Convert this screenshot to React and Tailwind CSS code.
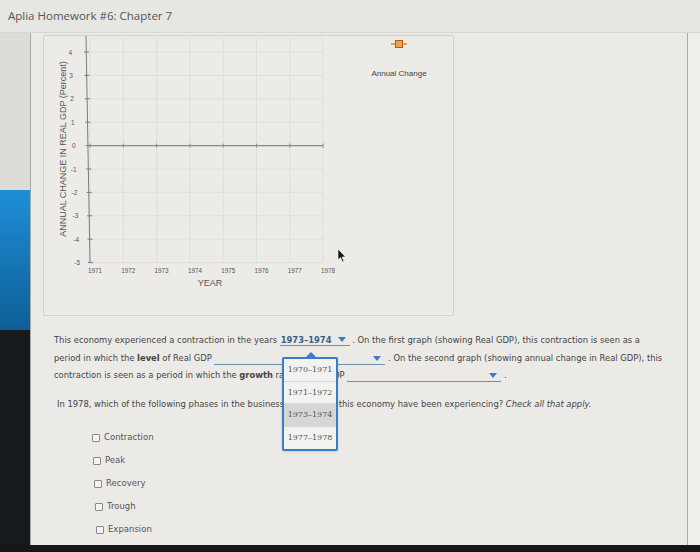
import React from 'react';

const YEARS = [1971, 1972, 1973, 1974, 1975, 1976, 1977, 1978];
const VALUES = [4, 3, 2, 1, 0, -1, -2, -3, -4, -5];
const OPTIONS = ['1970–1971', '1971–1972', '1973–1974', '1977–1978'];
const PHASES = ['Contraction', 'Peak', 'Recovery', 'Trough', 'Expansion'];

// chart geometry (local to graph panel)
const X0 = 46;
const DX = 33.3;
const Y4 = 16;
const DY = 23.4;
const xAt = (i) => X0 + i * DX;
const yAt = (v) => Y4 + (4 - v) * DY;

const Caret = () => (
  <svg width="8" height="5" viewBox="0 0 8 5" className="inline-block">
    <path d="M0 0h8L4 5z" fill="#3b7dc4" />
  </svg>
);

const Blank = ({ w }) => (
  <span className={`inline-flex items-end justify-end border-b border-[#6f8fae] h-[11px] align-baseline ${w}`}>
    <span className="mb-[2px] mr-[4px] leading-none"><Caret /></span>
  </span>
);

const Chart = () => (
  <svg width="320" height="262" className="block" style={{ fontFamily: '"Liberation Sans", Arial, sans-serif' }}>
    {/* grid */}
    {YEARS.map((y, i) => (
      <line key={y} x1={xAt(i)} y1={2} x2={xAt(i)} y2={yAt(-5)} stroke="#dededb" strokeWidth="1" />
    ))}
    {VALUES.map((v) => (
      <line key={v} x1={X0} y1={yAt(v)} x2={xAt(7)} y2={yAt(v)} stroke="#dededb" strokeWidth="1" />
    ))}
    <line x1={X0} y1={2} x2={xAt(7)} y2={2} stroke="#e2e2df" strokeWidth="1" />

    {/* axes */}
    <line x1={X0 - 4} y1={0} x2={X0} y2={yAt(-5)} stroke="#7a7a7a" strokeWidth="1" />
    <line x1={X0} y1={yAt(0)} x2={xAt(7)} y2={yAt(0)} stroke="#8a8a8a" strokeWidth="1.2" />
    {YEARS.map((y, i) => (
      <line key={'t' + y} x1={xAt(i)} y1={yAt(0) - 2} x2={xAt(i)} y2={yAt(0) + 2} stroke="#8a8a8a" strokeWidth="1" />
    ))}
    {VALUES.map((v, i) => (
      <line key={'ty' + v} x1={X0 - 4 + (i * 4) / 9 - 2} y1={yAt(v)} x2={X0 - 4 + (i * 4) / 9 + 3} y2={yAt(v)} stroke="#7a7a7a" strokeWidth="1" />
    ))}

    {/* tick labels */}
    {VALUES.map((v, i) => (
      <text key={'l' + v} x={28 + i * 0.9} y={yAt(v) + 2.5} fontSize="6.5" fill="#555" textAnchor="end">{v}</text>
    ))}
    {YEARS.map((y, i) => (
      <text key={'lx' + y} x={xAt(i) + 5} y={yAt(-5) + 10} fontSize="6.3" fill="#555" textAnchor="middle">{y}</text>
    ))}
    <text x={166} y={250} fontSize="9" fill="#555" textAnchor="middle">YEAR</text>
    <text x={0} y={0} fontSize="9" fill="#555" textAnchor="middle" transform="translate(22 113) rotate(-90)">
      ANNUAL CHANGE IN REAL GDP (Percent)
    </text>

    {/* mouse pointer */}
    <path d="M294 213 L294 224 L296.5 221.5 L298.5 226 L300 225.3 L298 221 L301.5 221 Z" fill="#111" stroke="#fff" strokeWidth="0.6" />
  </svg>
);

export default function App() {
  return (
    <div className="w-[700px] h-[552px] overflow-hidden flex flex-col bg-[#e9e8e5] text-[#444]" style={{ fontFamily: '"DejaVu Sans", Verdana, sans-serif' }}>
      {/* title bar */}
      <div className="h-[33px] shrink-0 flex items-center px-[8px] bg-[#e6e6e3] border-b border-[#d6d6d3]">
        <span className="text-[11.5px] text-[#555]" style={{ fontFamily: '"Open Sans", "Noto Sans", sans-serif' }}>
          Aplia Homework #6: Chapter 7
        </span>
      </div>

      <div className="flex-1 flex min-h-0">
        {/* left bezel */}
        <div className="w-[30px] shrink-0 flex flex-col">
          <div className="h-[157px] bg-[#dddcd9]" />
          <div className="h-[140px] bg-gradient-to-b from-[#1e8fd8] to-[#0f5f96]" />
          <div className="flex-1 bg-[#16191d]" />
        </div>

        {/* main panel */}
        <div className="flex-1 border-l border-r border-[#a9a9a6] bg-[#ebeae7] pl-[12px] pt-[2px]">
          {/* graph panel */}
          <div className="w-[411px] h-[281px] border border-[#d0d0cd] rounded-[2px] bg-[#ecebe8] flex">
            <Chart />
            <div className="w-[70px] flex flex-col items-center pt-[4px]">
              <svg width="16" height="8" viewBox="0 0 16 8">
                <line x1="0" y1="4" x2="16" y2="4" stroke="#e8892a" strokeWidth="1.5" />
                <rect x="4.5" y="0.5" width="7" height="7" fill="#f0a050" stroke="#b55d12" strokeWidth="1" />
              </svg>
              <span className="mt-[20px] text-[8px] text-[#444]" style={{ fontFamily: '"Liberation Sans", Arial, sans-serif' }}>
                Annual Change
              </span>
            </div>
          </div>

          {/* questions */}
          <div className="relative mt-[16px] pl-[11px] pr-[12px] text-[8.4px] leading-[17.5px]">
            <p className="whitespace-nowrap">
              This economy experienced a contraction in the years{' '}
              <span className="inline-flex items-end gap-[6px] border-b border-[#6f8fae] pl-[1px] pr-[4px] h-[11px]">
                <span className="font-bold text-[#3a5f87] leading-none mb-[1px]">1973–1974</span>
                <span className="mb-[2px] leading-none"><Caret /></span>
              </span>
              {' '}. On the first graph (showing Real GDP), this contraction is seen as a
              <br />
              period in which the <b>level</b> of Real GDP <Blank w="w-[171px]" />
              {' '}. On the second graph (showing annual change in Real GDP), this
              <br />
              contraction is seen as a period in which the <b>growth</b> rate of Real GDP <Blank w="w-[154px]" />
              {' '}.
            </p>
            <p className="mt-[11px] pl-[3px] whitespace-nowrap">
              In 1978, which of the following phases in the business cycle would this economy have been experiencing?{' '}
              <i>Check all that apply.</i>
            </p>

            <div className="mt-[13px] pl-[38px] flex flex-col">
              {PHASES.map((p, i) => (
                <label key={p} className="h-[23px] flex items-center gap-[4px] text-[8.5px] text-[#555]" style={{ paddingLeft: i }}>
                  <span className="w-[8px] h-[8px] border border-[#8a8a88] rounded-[1px] bg-[#f4f4f2]" />
                  {p}
                </label>
              ))}
            </div>

            {/* open dropdown */}
            <div className="absolute left-[239px] top-[20px]">
              <div className="ml-[24px] w-0 h-0 border-l-[5px] border-r-[5px] border-b-[5px] border-l-transparent border-r-transparent border-b-[#3b7dc4]" />
              <div className="w-[56px] border-2 border-[#3b7dc4] rounded-[2px] bg-[#f2f2f0] shadow-sm" style={{ fontFamily: '"DejaVu Serif", serif' }}>
                {OPTIONS.map((o, i) => (
                  <div
                    key={o}
                    className={`h-[22.5px] flex items-center justify-center text-[8px] text-[#555] ${i === 2 ? 'bg-[#d6d7d5]' : ''} ${i < 3 ? 'border-b border-[#d8d8d6]' : ''}`}
                  >
                    {o}
                  </div>
                ))}
              </div>
            </div>
          </div>
        </div>

        {/* right edge */}
        <div className="w-[12px] shrink-0 bg-[#efeeeb]" />
      </div>

      <div className="h-[7px] shrink-0 bg-[#141619]" />
    </div>
  );
}
